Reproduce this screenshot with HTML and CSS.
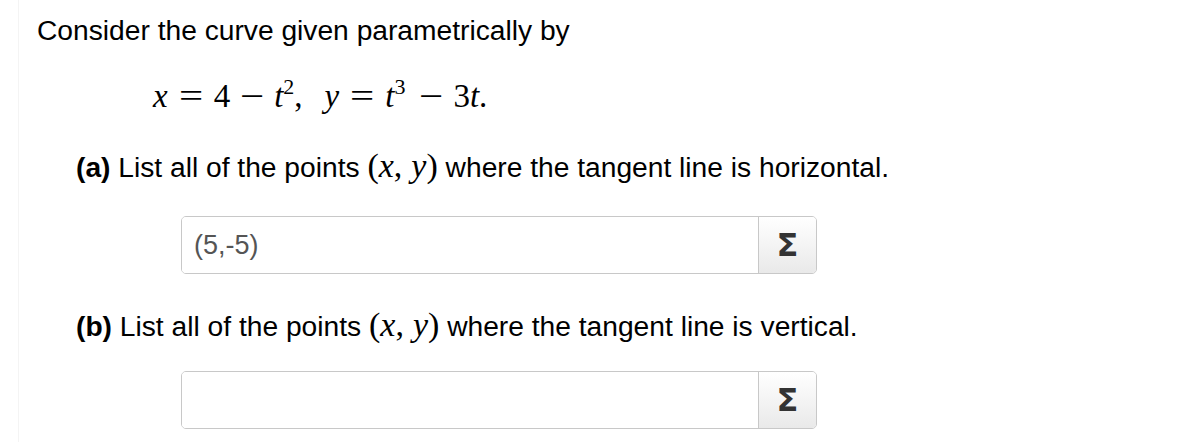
FILE: index.html
```html
<!DOCTYPE html>
<html>
<head>
<meta charset="utf-8">
<link rel="stylesheet" href="styles.css">
</head>
<body>
<div class="page">
  <p class="line intro">Consider the curve given parametrically by</p>
  <p class="eq"><span class="mi">x</span><span class="mo rel">=</span>4<span class="mo bin">−</span><span class="mi">t</span><sup>2</sup>,<span class="sp"></span><span class="mi">y</span><span class="mo rel">=</span><span class="mi">t</span><sup class="s3">3</sup><span class="mo bin">−</span>3<span class="mi">t</span>.</p>
  <p class="line q qa"><b>(a)</b> List all of the points <span class="m">(<span class="mi">x</span>,<span class="cs"></span><span class="mi">y</span>)</span> where the tangent line is horizontal.</p>
  <div class="answer a1">
    <div class="field">(5,-5)</div>
    <div class="btn">Σ</div>
  </div>
  <p class="line q qb"><b>(b)</b> List all of the points <span class="m">(<span class="mi">x</span>,<span class="cs"></span><span class="mi">y</span>)</span> where the tangent line is vertical.</p>
  <div class="answer a2">
    <div class="field"></div>
    <div class="btn">Σ</div>
  </div>
</div>
</body>
</html>
```

FILE: styles.css
```css
html, body {
  margin: 0;
  padding: 0;
  background: #ffffff;
}
.page {
  margin-left: 18px;
  border-left: 1px solid #f4f4f4;
  padding: 14px 0 0 18px;
  height: 428px;
  font-family: "Liberation Sans", Arial, sans-serif;
  color: #000;
}
p {
  margin: 0;
}
.line {
  font-size: 28.2px;
  line-height: 32px;
  white-space: nowrap;
}
.eq {
  margin-top: 34px;
  margin-left: 116px;
  font-family: "Liberation Serif", "Times New Roman", serif;
  font-size: 33px;
  line-height: 32px;
  white-space: nowrap;
}
.mi {
  font-style: italic;
}
.mo {
  display: inline-block;
  text-align: center;
  transform: scaleX(1.3);
}
.rel {
  width: 46px;
}
.bin {
  width: 44px;
}
.eq sup {
  font-size: 22px;
  line-height: 0;
  vertical-align: 13px;
}
.eq .s3 {
  margin-right: 4px;
}
.sp {
  display: inline-block;
  width: 22px;
}
.m {
  font-family: "Liberation Serif", "Times New Roman", serif;
  font-size: 34px;
  line-height: 32px;
}
.cs {
  display: inline-block;
  width: 9px;
}
.q {
  margin-left: 39px;
}
.qa {
  margin-top: 38px;
}
.qb {
  margin-top: 35px;
}
.answer {
  display: flex;
  margin-left: 144px;
  width: 636px;
  height: 58px;
  box-sizing: border-box;
  border: 1px solid #c8c8c8;
  border-radius: 5px;
  overflow: hidden;
  box-shadow: inset 0 1px 2px rgba(0,0,0,0.06);
}
.a1 {
  margin-top: 33px;
}
.a2 {
  margin-top: 29px;
}
.field {
  flex: 1;
  padding-left: 12px;
  display: flex;
  align-items: center;
  font-size: 27px;
  color: #555;
  background: #fff;
}
.btn {
  width: 57px;
  border-left: 1px solid #c8c8c8;
  background: linear-gradient(#ffffff, #e9e9e9);
  display: flex;
  align-items: center;
  justify-content: center;
  font-family: "DejaVu Sans", sans-serif;
  font-weight: bold;
  font-size: 32px;
  color: #333;
}
```
